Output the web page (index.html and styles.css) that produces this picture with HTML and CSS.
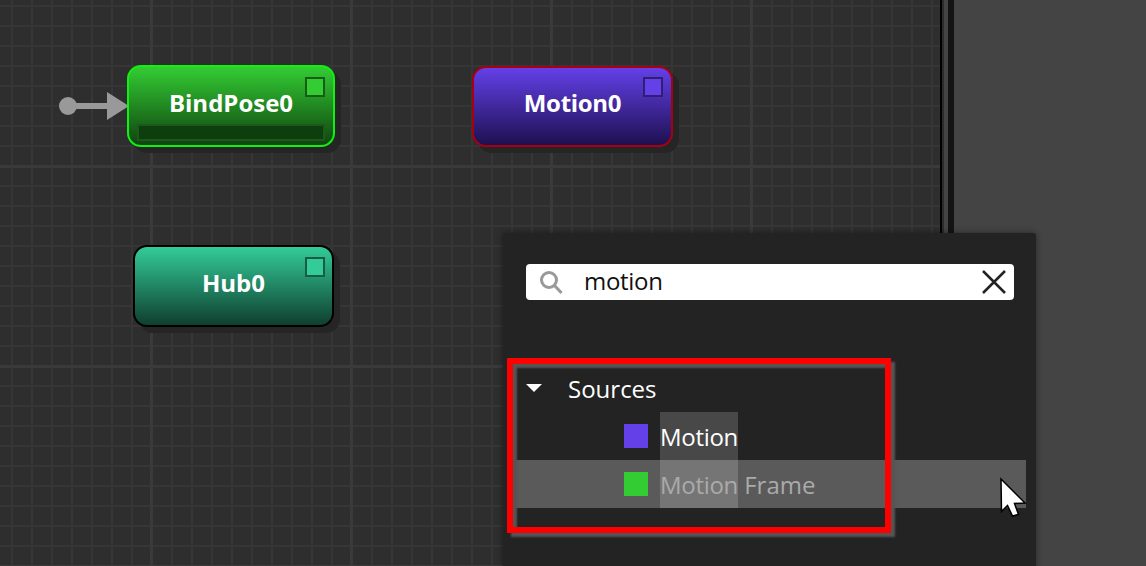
FILE: index.html
```html
<!DOCTYPE html>
<html lang="en">
<head>
<meta charset="utf-8">
<title>Animator node graph</title>
<link rel="stylesheet" href="styles.css">
</head>
<body>
<div class="app">
  <section class="canvas">
    <svg class="entry" width="80" height="40" viewBox="0 0 80 40">
      <circle cx="9" cy="15" r="9"/>
      <rect x="9" y="12" width="40" height="6"/>
      <path d="M48 1 L70 15 L48 29 Z"/>
    </svg>
    <div class="node node-green">
      <span class="node-check"></span>
      <span class="node-title">BindPose0</span>
      <span class="node-bar"></span>
    </div>
    <div class="node node-purple">
      <span class="node-check"></span>
      <span class="node-title">Motion0</span>
    </div>
    <div class="node node-teal">
      <span class="node-check"></span>
      <span class="node-title">Hub0</span>
    </div>
  </section>
  <div class="split"><i class="s1"></i><i class="s2"></i><i class="s3"></i><i class="s4"></i></div>
  <aside class="panel"></aside>
  <div class="popup">
    <div class="search">
      <svg class="search-icon" width="26" height="28" viewBox="0 0 26 28">
        <circle cx="10" cy="10" r="7.5"/>
        <path d="M15.5 15.5 L22.500 23"/>
      </svg>
      <span class="search-text">motion</span>
      <svg class="search-clear" width="26" height="26" viewBox="0 0 26 26">
        <path d="M2 2 L24 24 M24 2 L2 24"/>
      </svg>
    </div>
    <div class="tree">
      <div class="row row-group"><i class="caret"></i><span>Sources</span></div>
      <div class="row row-item">
        <i class="swatch swatch-purple"></i><span class="match">Motion</span>
      </div>
      <div class="row row-item row-hover">
        <i class="swatch swatch-green"></i><span class="match">Motion</span><span class="rest">&nbsp;Frame</span>
      </div>
    </div>
  </div>
  <div class="callout"></div>
  <svg class="pointer" width="30" height="44" viewBox="0 0 30 44">
    <path d="M2 2 L26 26 L15.500 26.500 L19.500 37.500 L13.500 39 L8.500 28.500 L2.500 34.500 Z"/>
  </svg>
</div>
</body>
</html>
```
FILE: styles.css
```css
* { box-sizing: border-box; }
html, body { margin: 0; height: 100%; overflow: hidden; background: #444; }
.app {
  position: relative;
  display: flex;
  width: 1146px;
  height: 566px;
  overflow: hidden;
  font-family: "Open Sans", "Noto Sans", sans-serif;
}
.canvas {
  position: relative;
  flex: 0 0 940px;
  background-color: #2e2e2e;
  background-image:
    linear-gradient(#3a3a3a 3px, transparent 3px),
    linear-gradient(90deg, #3a3a3a 3px, transparent 3px),
    linear-gradient(#363636 2px, transparent 2px),
    linear-gradient(90deg, #363636 2px, transparent 2px);
  background-size: 100% 200px, 200px 100%, 20px 20px, 20px 20px;
  background-position: 0 165px, 150px 0, 0 5px, 11px 0;
}
.split { display: flex; flex: 0 0 14px; }
.split i { display: block; }
.s1 { width: 2px; background: #000; }
.s2 { width: 2px; background: #2c2c2c; }
.s3 { width: 4px; background: #444; }
.s4 { width: 6px; background: #141414; }
.panel { flex: 1; background: #444; }

.entry { position: absolute; left: 59px; top: 91px; fill: #999; }

.node {
  position: absolute;
  display: flex;
  align-items: center;
  justify-content: center;
  border: 2px solid #000;
  border-radius: 14px;
  box-shadow: 6px 6px 0 #252525;
  color: #fff;
}
.node-title { font-size: 24px; font-weight: 700; line-height: 30px; margin-top: -7px; }
.node-check {
  position: absolute;
  top: 10px;
  right: 8px;
  width: 20px;
  height: 20px;
  border: 2px solid;
}
.node-green {
  left: 127px; top: 65px; width: 208px; height: 82px;
  border-color: #11f011;
  background: linear-gradient(#33cc33, #0f4410);
}
.node-green .node-check { background: #33cc33; border-color: #185c18; }
.node-bar {
  position: absolute;
  left: 8px;
  right: 8px;
  bottom: 4px;
  height: 17px;
  background: #0e3e0e;
  border: 2px solid #1a5a1a;
}
.node-purple {
  left: 472px; top: 66px; width: 201px; height: 81px;
  border-color: #a80010;
  background: linear-gradient(#6340e8, #1e1050);
}
.node-purple .node-title { letter-spacing: -.3px; }
.node-purple .node-check { top: 9px; background: #6340e8; border-color: #2e1f70; }
.node-teal {
  left: 133px; top: 245px; width: 201px; height: 82px;
  background: linear-gradient(#33cc99, #0f3f2e);
}
.node-teal .node-check { right: 7px; background: #33cc99; border-color: #185c46; }

.popup {
  position: absolute;
  left: 503px;
  top: 233px;
  width: 533px;
  height: 340px;
  padding: 31px 10px 0 11px;
  background: #232323;
  border-radius: 3px;
  box-shadow: 0 0 6px rgba(0, 0, 0, .45);
}
.search {
  display: flex;
  align-items: center;
  width: 488px;
  height: 36px;
  margin-left: 12px;
  background: #fff;
  border-radius: 4px;
}
.search-icon { flex: none; margin: 4px 0 0 13px; fill: none; stroke: #999; stroke-width: 3; }
.search-text { flex: 1; margin: -2px 0 0 19px; color: #111; font-size: 24px; line-height: 36px; letter-spacing: -.3px; }
.search-clear { flex: none; margin-right: 7px; fill: none; stroke: #222; stroke-width: 2.5; }
.tree { margin-top: 64px; }
.row { display: flex; align-items: flex-start; height: 48px; color: #fff; font-size: 24px; line-height: 50px; }
.row-group { padding-left: 12px; }
.caret {
  width: 0;
  height: 0;
  margin: 20px 26px 0 0;
  border-left: 8px solid transparent;
  border-right: 8px solid transparent;
  border-top: 8px solid #fff;
}
.row-item { padding-left: 110px; }
.row-hover { background: #5a5a5a; color: #aaa; }
.swatch { flex: none; width: 24px; height: 24px; margin: 12px 12px 0 0; }
.swatch-purple { background: #6340e8; }
.swatch-green { background: #33cc33; }
.match { display: block; height: 48px; letter-spacing: -.3px; background: rgba(255, 255, 255, .168); }

.callout {
  position: absolute;
  left: 507px;
  top: 358px;
  width: 384px;
  height: 175px;
  border: 6px solid #f00;
  box-shadow: 4px 4px 2px #555, inset 4px 4px 2px #555;
}
.pointer {
  position: absolute;
  left: 999px;
  top: 477px;
  fill: #fff;
  stroke: #000;
  stroke-width: 1.500;
}
```
